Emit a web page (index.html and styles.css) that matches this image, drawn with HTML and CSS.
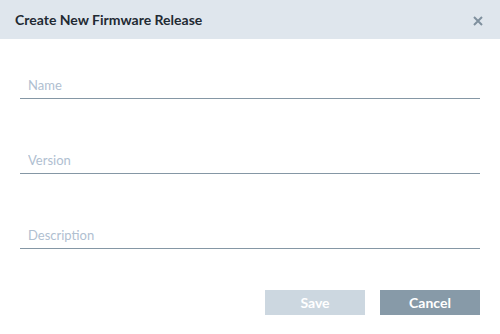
FILE: index.html
```html
<!DOCTYPE html>
<html lang="en">
  <head>
    <meta charset="UTF-8" />
    <title>Create New Firmware Release</title>
    <link rel="stylesheet" href="styles.css">
  </head>
  <body>
    <div class="dialog">
      <div class="dialog-header">
        <span class="dialog-title">Create New Firmware Release</span>
        <button class="close" aria-label="Close">
          <svg width="10" height="10" viewBox="0 0 10 10">
            <path d="M1 1 L9 9 M9 1 L1 9" stroke="#7f909e" stroke-width="2" />
          </svg>
        </button>
      </div>
      <form class="dialog-body">
        <div class="field"><input type="text" placeholder="Name"></div>
        <div class="field"><input type="text" placeholder="Version"></div>
        <div class="field"><input type="text" placeholder="Description"></div>
        <div class="actions">
          <button type="button" class="btn btn-save" disabled>Save</button>
          <button type="button" class="btn btn-cancel">Cancel</button>
        </div>
      </form>
    </div>
  </body>
</html>
```

FILE: styles.css
```css
body {
  margin: 0;
  background: #fff;
  font-family: Lato, "Noto Sans", sans-serif;
}
.dialog {
  width: 500px;
  height: 334px;
}
.dialog-header {
  height: 39px;
  background: #dfe6ed;
  display: flex;
  align-items: center;
  justify-content: space-between;
  padding: 0 16px 0 15px;
  box-sizing: border-box;
}
.dialog-title {
  font-size: 14px;
  font-weight: 700;
  color: #1f2a33;
}
.close {
  border: none;
  background: none;
  padding: 0;
  width: 12px;
  height: 12px;
  display: flex;
  align-items: center;
  justify-content: center;
  margin-top: 3px;
  cursor: pointer;
}
.dialog-body {
  padding: 36px 20px 0;
  margin: 0;
}
.field + .field {
  margin-top: 51px;
}
.field input {
  display: block;
  width: 100%;
  box-sizing: border-box;
  border: none;
  border-bottom: 1px solid #8597a5;
  outline: none;
  padding: 0 0 4px 8px;
  height: 24px;
  font-family: inherit;
  font-size: 13px;
  color: #1f2a33;
}
.field input::placeholder {
  color: #b0c0d1;
}
.actions {
  display: flex;
  justify-content: flex-end;
  gap: 15px;
  margin-top: 41px;
}
.btn {
  width: 100px;
  height: 25px;
  border: none;
  font-family: inherit;
  font-size: 14px;
  font-weight: 700;
  color: #fff;
  padding: 0;
}
.btn-save {
  background: #ccd7e0;
}
.btn-cancel {
  background: #879aa8;
}
```
